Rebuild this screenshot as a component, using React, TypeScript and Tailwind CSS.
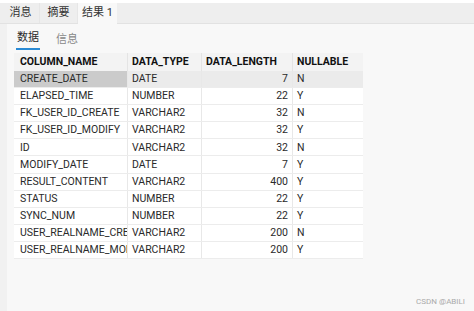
import React from "react";

const rows = [
  ["CREATE_DATE", "DATE", "7", "N"],
  ["ELAPSED_TIME", "NUMBER", "22", "Y"],
  ["FK_USER_ID_CREATE", "VARCHAR2", "32", "N"],
  ["FK_USER_ID_MODIFY", "VARCHAR2", "32", "Y"],
  ["ID", "VARCHAR2", "32", "N"],
  ["MODIFY_DATE", "DATE", "7", "Y"],
  ["RESULT_CONTENT", "VARCHAR2", "400", "Y"],
  ["STATUS", "NUMBER", "22", "Y"],
  ["SYNC_NUM", "NUMBER", "22", "Y"],
  ["USER_REALNAME_CREATE", "VARCHAR2", "200", "N"],
  ["USER_REALNAME_MODIFY", "VARCHAR2", "200", "Y"],
];

export default function App() {
  return (
    <div
      className="w-[474px] h-[311px] bg-[#f8f8f8] text-[10.5px] text-[#2a2a2a] relative overflow-hidden"
      style={{ fontFamily: 'Roboto, "Noto Sans CJK SC", sans-serif' }}
    >
      {/* top tabs */}
      <div className="h-[3px] bg-white" />
      <div className="flex h-[21px] bg-[#eeeeee] border-b border-[#e2e2e2] text-[11px]">
        <div className="w-[40px] pl-[2px] flex items-center justify-center border-r border-[#e6e6e6] text-[#333]">消息</div>
        <div className="w-[38px] flex items-center justify-center border-r border-[#e6e6e6] text-[#333]">摘要</div>
        <div className="w-[39px] flex items-center justify-center bg-[#f8f8f8] -mb-px text-[#333]">结果 1</div>
      </div>

      <div className="flex">
        <div className="w-[7px] h-[287px] bg-[#f1f1f1]" />
        <div className="flex-1">
          {/* sub tabs */}
          <div className="flex gap-[16px] pl-[9px] h-[26px] items-end text-[11px]">
            <div className="pb-[2px] border-b-2 border-[#2a8ad4] px-[1px] leading-[16px]">数据</div>
            <div className="pb-[2px] leading-[16px] text-[#888]">信息</div>
          </div>

          {/* table */}
          <div className="mt-[3px] ml-[7px] w-[349px]">
            <div className="flex h-[18px] bg-[#f3f3f3] font-bold text-[#111]">
              <div className="w-[114px] px-[6px] flex items-center border-r border-[#e4e4e4]">COLUMN_NAME</div>
              <div className="w-[74px] px-[4px] flex items-center border-r border-[#e4e4e4]">DATA_TYPE</div>
              <div className="w-[91px] px-[4px] flex items-center border-r border-[#e4e4e4]">DATA_LENGTH</div>
              <div className="w-[70px] px-[4px] flex items-center">NULLABLE</div>
            </div>
            {rows.map((r, i) => (
              <div
                key={i}
                className={
                  "flex h-[17.1px] border-b border-[#ececec] " +
                  (i === 0 ? "bg-[#ebebeb]" : "bg-white")
                }
              >
                <div
                  className={
                    "w-[114px] px-[6px] flex items-center border-r border-[#e8e8e8] whitespace-nowrap overflow-hidden " +
                    (i === 0 ? "bg-[#cbcbcb]" : "")
                  }
                >
                  {r[0]}
                </div>
                <div className="w-[74px] px-[4px] flex items-center border-r border-[#e8e8e8]">{r[1]}</div>
                <div className="w-[91px] px-[4px] flex items-center justify-end border-r border-[#e8e8e8]">{r[2]}</div>
                <div className="w-[70px] px-[4px] flex items-center">{r[3]}</div>
              </div>
            ))}
          </div>
        </div>
      </div>

      <div className="absolute right-[9px] bottom-[3px] text-[8px] text-[#aaa]">CSDN @ABILI</div>
    </div>
  );
}
